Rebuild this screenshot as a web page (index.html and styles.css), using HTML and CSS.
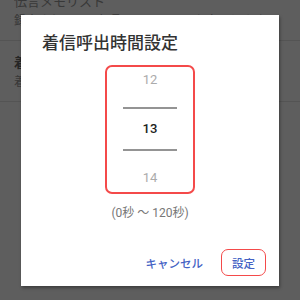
FILE: index.html
```html
<!DOCTYPE html>
<html lang="ja">
<head>
    <meta charset="UTF-8">
    <title>着信呼出時間設定</title>
    <link rel="stylesheet" href="styles.css">
</head>
<body>
    <div class="settings">
        <div class="item first">
            <div class="item-title">伝言メモリスト</div>
            <div class="item-desc">録音されている伝言メモのリストを表示します</div>
        </div>
        <div class="item">
            <div class="item-title bold">着信呼出時間設定</div>
            <div class="item-desc">着信時の呼出時間を設定します</div>
        </div>
    </div>

    <div class="dialog">
        <div class="dialog-title">着信呼出時間設定</div>
        <div class="picker">
            <div class="num num-top">12</div>
            <div class="divider"></div>
            <div class="num num-mid">13</div>
            <div class="divider"></div>
            <div class="num num-bot">14</div>
        </div>
        <div class="range">(0秒 〜 120秒)</div>
        <div class="actions">
            <button class="btn">キャンセル</button>
            <button class="btn btn-ok">設定</button>
        </div>
    </div>
</body>
</html>
```

FILE: styles.css
```css
body {
    margin: 0;
    width: 300px;
    height: 300px;
    overflow: hidden;
    background-color: #5e5e5e;
    font-family: Roboto, "Noto Sans CJK JP", sans-serif;
}

.settings {
    color: #383838;
}

.item {
    padding: 8px 14px 10px;
    border-bottom: 1px solid #545454;
}

.item.first {
    margin-top: -12px;
    padding-top: 6px;
}

.item-title {
    font-size: 13px;
    line-height: 16px;
}

.item-title.bold {
    font-weight: bold;
    color: #262626;
    margin-top: 6px;
}

.item-desc {
    font-size: 12px;
    line-height: 18px;
    margin-top: 2px;
}

.dialog {
    position: absolute;
    left: 21px;
    top: 15px;
    width: 258px;
    height: 271px;
    box-sizing: border-box;
    padding-top: 16px;
    background-color: #fff;
    box-shadow: 1px 2px 3px rgba(0, 0, 0, 0.35);
    display: flex;
    flex-direction: column;
}

.dialog-title {
    padding-left: 21px;
    font-size: 17px;
    line-height: 24px;
    font-weight: 500;
    color: #333;
}

.picker {
    width: 90px;
    height: 129px;
    box-sizing: border-box;
    margin: 10px auto 0;
    border: 2px solid #f44a4a;
    border-radius: 7px;
    display: flex;
    flex-direction: column;
    align-items: center;
}

.num {
    font-size: 13px;
}

.num-top {
    height: 26px;
    line-height: 26px;
    margin-bottom: 14px;
    color: #ababab;
}

.num-mid {
    height: 40px;
    line-height: 40px;
    color: #222;
    font-weight: 500;
}

.num-bot {
    margin-top: 13px;
    height: 28px;
    line-height: 28px;
    color: #ababab;
}

.divider {
    width: 54px;
    height: 2px;
    background-color: #949494;
}

.range {
    margin-top: 11px;
    text-align: center;
    font-size: 12px;
    line-height: 16px;
    color: #777;
}

.actions {
    margin-top: 28px;
    padding-right: 13px;
    display: flex;
    justify-content: flex-end;
    align-items: center;
    gap: 7px;
}

.btn {
    height: 27px;
    padding: 0 10px;
    border: 1.5px solid transparent;
    border-radius: 7px;
    background: none;
    font-family: Roboto, "Noto Sans CJK JP", sans-serif;
    font-size: 11.5px;
    font-weight: 500;
    color: #4462c4;
}

.btn-ok {
    border-color: #f44a4a;
}
```
